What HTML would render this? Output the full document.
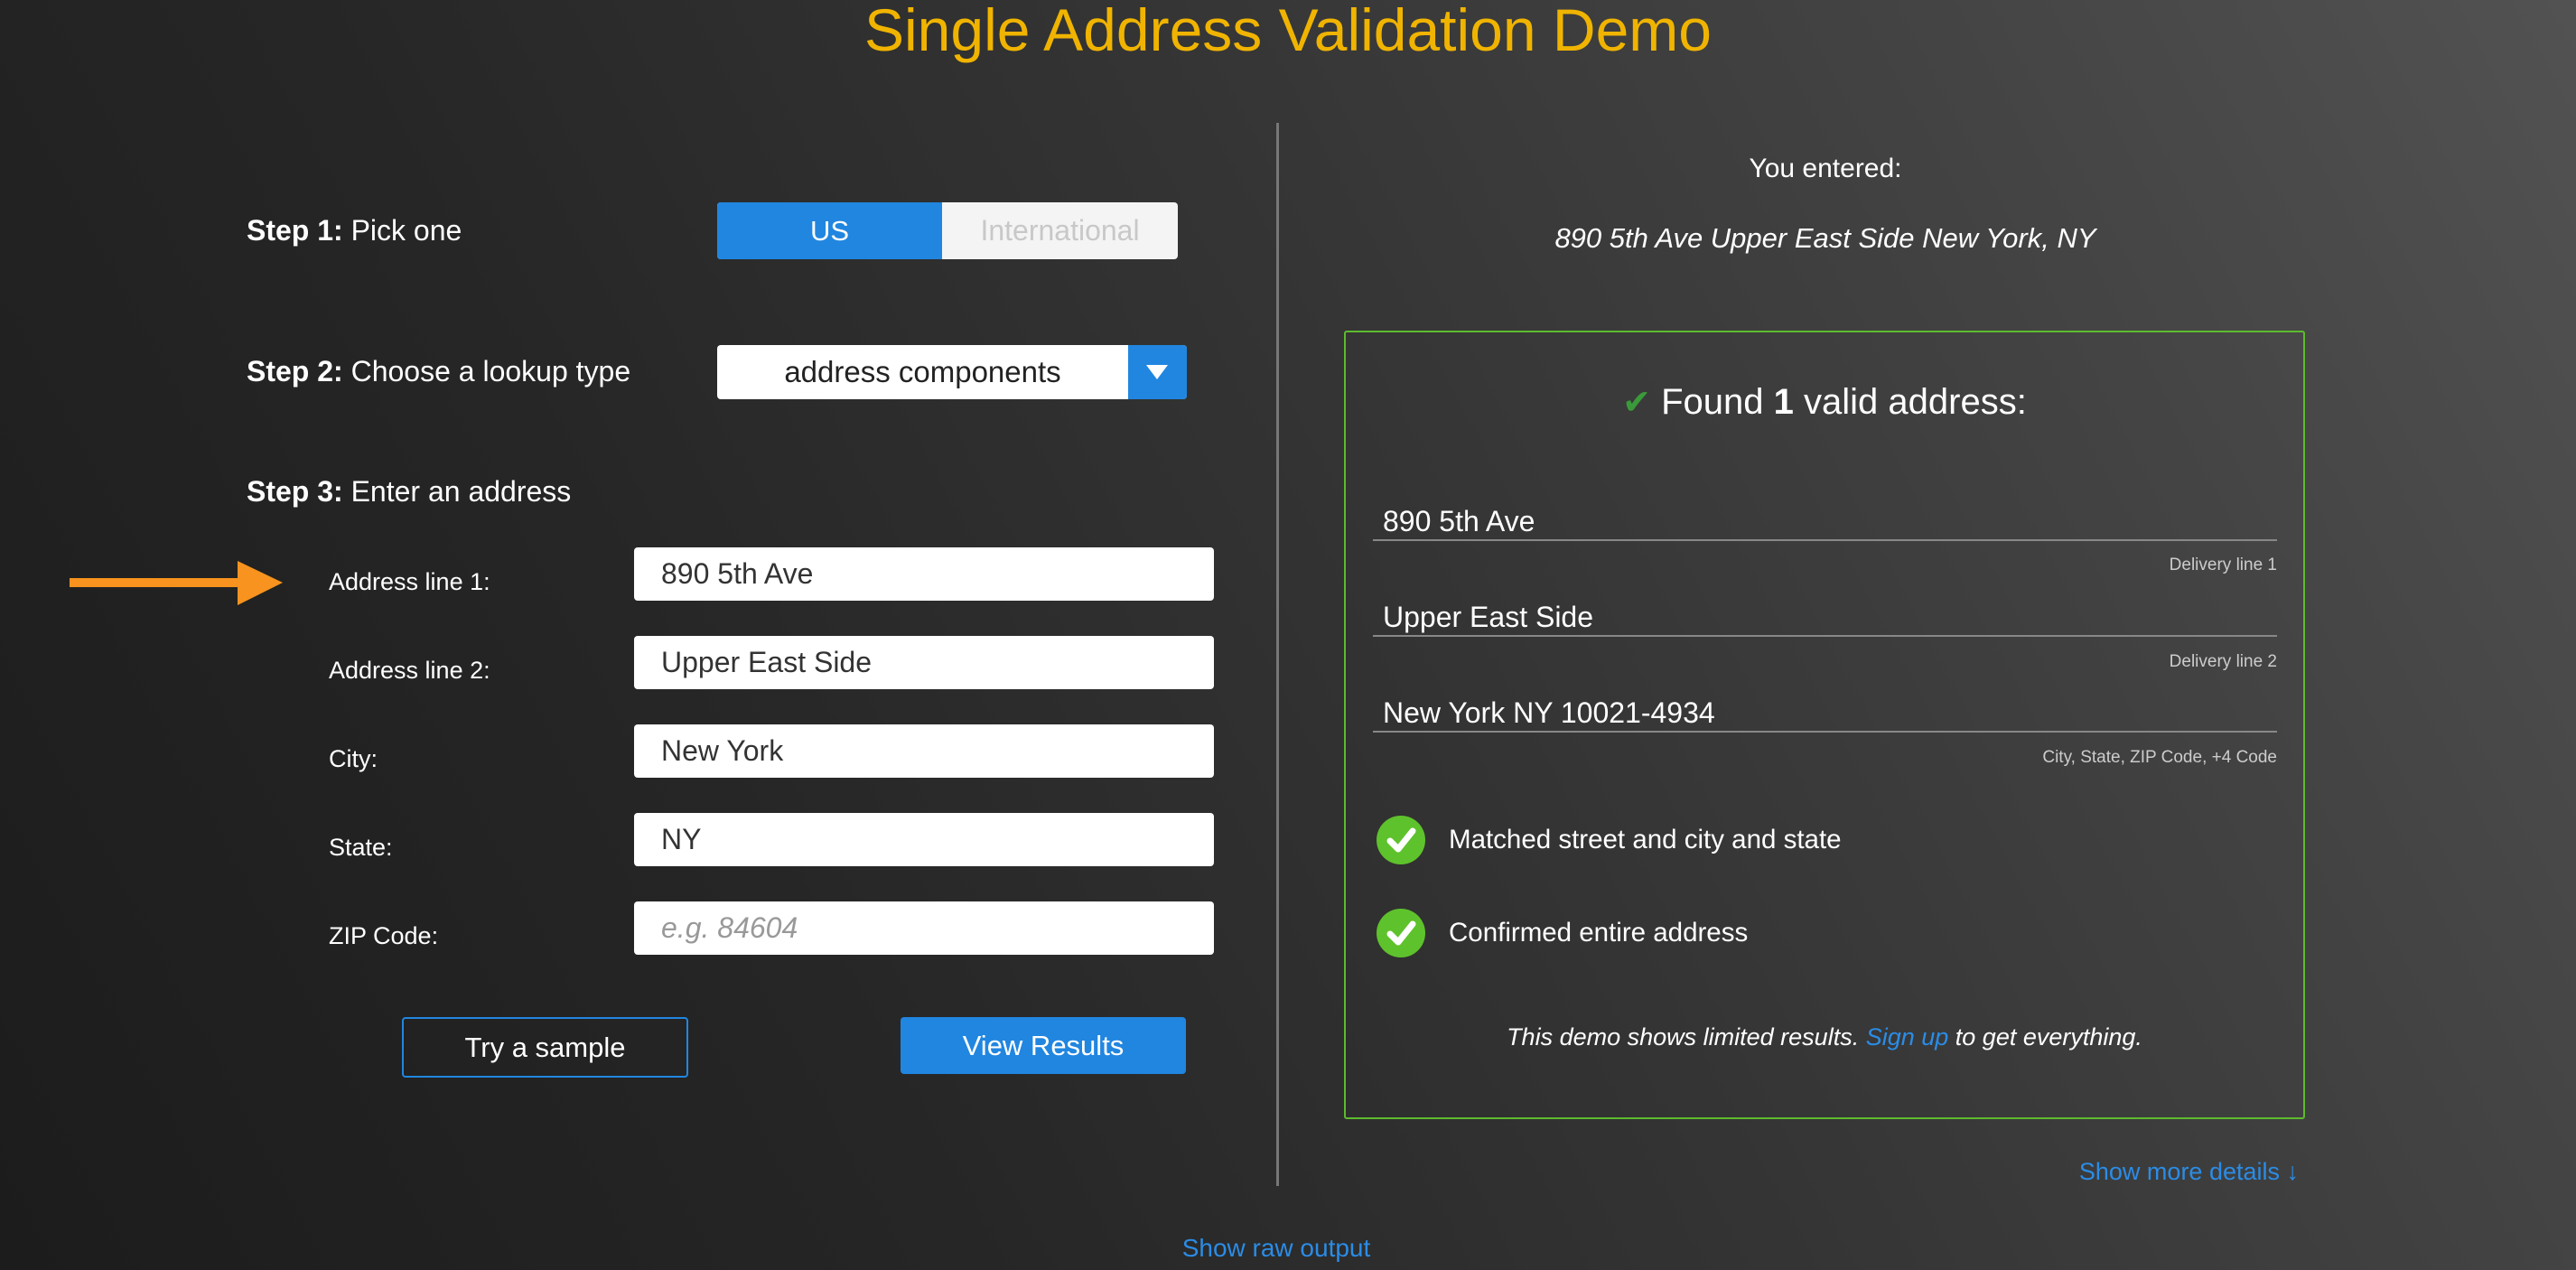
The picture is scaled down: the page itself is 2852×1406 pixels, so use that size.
<!DOCTYPE html>
<html><head><meta charset="utf-8"><style>
*{margin:0;padding:0;box-sizing:border-box}
html,body{width:2852px;height:1406px;overflow:hidden}
body{font-family:"Liberation Sans",sans-serif;color:#fff;position:relative;
background:linear-gradient(62deg,#1c1c1c 0%,#262626 30%,#343434 55%,#444 80%,#525252 100%);}
.a{position:absolute;white-space:nowrap}
.lbl{font-size:32px;line-height:40px}
.in{position:absolute;left:702px;width:642px;height:59px;background:#fff;border-radius:4px;color:#333;font-size:32px;line-height:59px;padding-left:30px}
.fl{position:absolute;left:364px;font-size:27px;line-height:30px}
.row{position:absolute;left:1520px;width:1001px;border-bottom:2px solid #888;font-size:32px;padding-left:11px;line-height:40px}
.sm{position:absolute;right:331px;font-size:19px;color:#ccc;line-height:24px}
.ck{position:absolute;left:1524px;width:54px;height:54px;border-radius:50%;background:#5ec22c}
</style></head><body>
<div class="a" style="left:0;width:2852px;text-align:center;top:-2px;font-size:66px;line-height:70px;color:#f0b400">Single Address Validation Demo</div>

<div class="a lbl" style="left:273px;top:235px"><b>Step 1:</b> Pick one</div>
<div class="a" style="left:794px;top:224px;width:510px;height:63px;border-radius:4px;overflow:hidden;background:#f4f4f4">
 <div class="a" style="left:0;top:0;width:249px;height:63px;background:#2186e0;text-align:center;font-size:31px;line-height:63px">US</div>
 <div class="a" style="left:249px;top:0;width:261px;height:63px;text-align:center;font-size:32px;line-height:63px;color:#c8c8c8">International</div>
</div>

<div class="a lbl" style="left:273px;top:391px"><b>Step 2:</b> Choose a lookup type</div>
<div class="a" style="left:794px;top:382px;width:520px;height:60px;border-radius:4px;overflow:hidden;background:#fff">
 <div class="a" style="left:0;top:0;width:455px;text-align:center;color:#222;font-size:33px;line-height:60px">address components</div>
 <div class="a" style="left:455px;top:0;width:65px;height:60px;background:#2186e0"><svg width="65" height="60"><polygon points="20,22 44,22 32,38" fill="#fff"/></svg></div>
</div>

<div class="a lbl" style="left:273px;top:524px"><b>Step 3:</b> Enter an address</div>

<svg class="a" style="left:75px;top:618px" width="245" height="56"><rect x="2" y="22" width="190" height="10" fill="#f7931e"/><polygon points="188,3 238,27 188,52" fill="#f7931e"/></svg>

<div class="fl" style="top:629px">Address line 1:</div><div class="in" style="top:606px">890 5th Ave</div>
<div class="fl" style="top:727px">Address line 2:</div><div class="in" style="top:704px">Upper East Side</div>
<div class="fl" style="top:825px">City:</div><div class="in" style="top:802px">New York</div>
<div class="fl" style="top:923px">State:</div><div class="in" style="top:900px">NY</div>
<div class="fl" style="top:1021px">ZIP Code:</div><div class="in" style="top:998px;color:#999;font-style:italic">e.g. 84604</div>

<div class="a" style="left:445px;top:1126px;width:317px;height:67px;border:2px solid #2186e0;border-radius:4px;text-align:center;font-size:31px;line-height:63px">Try a sample</div>
<div class="a" style="left:997px;top:1126px;width:316px;height:63px;background:#2186e0;border-radius:4px;text-align:center;font-size:31px;line-height:63px">View Results</div>

<div class="a" style="left:1413px;top:136px;width:3px;height:1177px;background:#777"></div>
<div class="a" style="left:0;width:2826px;text-align:center;top:1366px;font-size:28px;line-height:32px;color:#2b8ce6">Show raw output</div>

<div class="a" style="left:1521px;width:1000px;text-align:center;top:168px;font-size:30px;line-height:38px">You entered:</div>
<div class="a" style="left:1521px;width:1000px;text-align:center;top:245px;font-size:31px;line-height:38px;font-style:italic">890 5th Ave Upper East Side New York, NY</div>

<div class="a" style="left:1488px;top:366px;width:1064px;height:873px;border:2px solid #5dbb2d;border-radius:3px"></div>
<div class="a" style="left:1488px;width:1064px;text-align:center;top:421px;font-size:40px;line-height:48px"><span style="color:#3a9a3a;font-size:38px">&#10004;</span> Found <b>1</b> valid address:</div>

<div class="row" style="top:557px">890 5th Ave</div><div class="sm" style="top:614px">Delivery line 1</div>
<div class="row" style="top:663px">Upper East Side</div><div class="sm" style="top:721px">Delivery line 2</div>
<div class="row" style="top:769px">New York NY 10021-4934</div><div class="sm" style="top:827px">City, State, ZIP Code, +4 Code</div>

<div class="ck" style="top:903px"><svg width="54" height="54"><path d="M15 28 L24 37 L40 17" stroke="#fff" stroke-width="7" fill="none" stroke-linecap="round" stroke-linejoin="round"/></svg></div>
<div class="a" style="left:1604px;top:912px;font-size:29.5px;line-height:36px">Matched street and city and state</div>
<div class="ck" style="top:1006px"><svg width="54" height="54"><path d="M15 28 L24 37 L40 17" stroke="#fff" stroke-width="7" fill="none" stroke-linecap="round" stroke-linejoin="round"/></svg></div>
<div class="a" style="left:1604px;top:1015px;font-size:29.5px;line-height:36px">Confirmed entire address</div>

<div class="a" style="left:1488px;width:1064px;text-align:center;top:1130px;font-size:27px;line-height:36px;font-style:italic">This demo shows limited results. <span style="color:#2b8ce6">Sign up</span> to get everything.</div>
<div class="a" style="right:307px;top:1280px;font-size:27px;line-height:34px;color:#2b8ce6">Show more details ↓</div>
</body></html>
